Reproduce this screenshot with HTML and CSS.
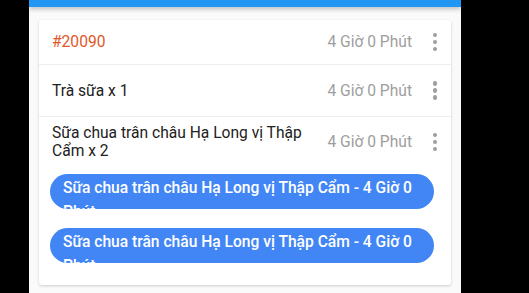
FILE: index.html
```html
<!DOCTYPE html>
<html lang="vi">
<head>
<meta charset="utf-8">
<link rel="stylesheet" href="styles.css">
</head>
<body>
<div class="screen">
  <div class="appbar"></div>
  <div class="card">
    <div class="row row-head">
      <div class="name order">#20090</div>
      <div class="time">4 Giờ 0 Phút</div>
      <div class="more"><span></span><span></span><span></span></div>
    </div>
    <div class="row row-item">
      <div class="name">Trà sữa x 1</div>
      <div class="time">4 Giờ 0 Phút</div>
      <div class="more"><span></span><span></span><span></span></div>
    </div>
    <div class="row row-multi">
      <div class="name">Sữa chua trân châu Hạ Long vị Thập Cẩm x 2</div>
      <div class="time">4 Giờ 0 Phút</div>
      <div class="more"><span></span><span></span><span></span></div>
    </div>
    <div class="pills">
      <div class="pill">Sữa chua trân châu Hạ Long vị Thập Cẩm - 4 Giờ 0 Phút</div>
      <div class="pill">Sữa chua trân châu Hạ Long vị Thập Cẩm - 4 Giờ 0 Phút</div>
    </div>
  </div>
</div>
</body>
</html>
```
FILE: styles.css
```css
html, body {
  margin: 0;
  padding: 0;
  background: #000;
  height: 293px;
  overflow: hidden;
}
.screen {
  margin-left: 29px;
  width: 432px;
  height: 293px;
  background: #fafafa;
  font-family: Roboto, "Noto Sans", sans-serif;
  overflow: hidden;
}
.appbar {
  height: 7px;
  background: #2196f3;
  box-shadow: 0 2px 5px rgba(0,0,0,0.25);
}
.card {
  margin: 13px 10px 0 10px;
  background: #fff;
  border-radius: 3px;
  box-shadow: 0 1px 3px rgba(0,0,0,0.18);
  height: 265px;
}
.row {
  display: flex;
  align-items: center;
  padding-left: 13px;
  border-bottom: 1px solid #eeeeee;
}
.row-head { height: 44px; }
.row-item { height: 51px; }
.row-multi { padding-top: 7px; padding-bottom: 6px; border-bottom: none; }
.name {
  flex: 1;
  font-size: 15.6px;
  line-height: 18px;
  color: #212121;
  padding-right: 14px;
}
.order { color: #e2572a; }
.time {
  font-size: 15.6px;
  color: #9e9e9e;
  white-space: nowrap;
}
.more {
  width: 24px;
  margin-left: 11px;
  margin-right: 4px;
  display: flex;
  flex-direction: column;
  align-items: center;
  gap: 2.5px;
}
.more span {
  width: 4.5px;
  height: 4.5px;
  border-radius: 50%;
  background: #9e9e9e;
}
.pills {
  display: flex;
  flex-direction: column;
  gap: 19px;
  margin: 8px 17px 0 11px;
}
.pill {
  height: 35px;
  box-sizing: border-box;
  padding: 2px 13px 0 13px;
  border-radius: 18px;
  background: #4286f5;
  color: #fff;
  font-size: 15.6px;
  font-weight: 500;
  line-height: 24px;
  overflow: hidden;
}
```
